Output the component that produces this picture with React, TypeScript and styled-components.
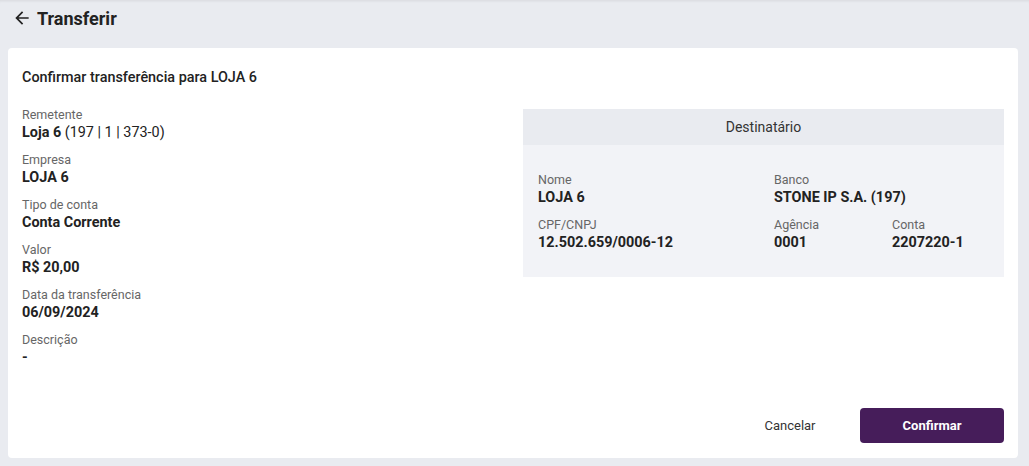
import React from 'react';
import styled, { createGlobalStyle } from 'styled-components';

const GlobalStyle = createGlobalStyle`
  html, body {
    margin: 0;
    padding: 0;
    height: 100%;
  }
  body {
    font-family: Roboto, 'Liberation Sans', sans-serif;
    background: #e9ebf0;
    color: #222;
  }
  #root {
    height: 100%;
  }
`;

const Page = styled.div`
  height: 100vh;
  display: flex;
  flex-direction: column;
  box-sizing: border-box;
  padding: 0 11px 8px 8px;
  box-shadow: inset 0 3px 3px -2px rgba(0, 0, 0, 0.08);
`;

const Header = styled.div`
  height: 48px;
  display: flex;
  align-items: center;
  gap: 5px;
  padding: 0 0 12px 4px;
  box-sizing: border-box;
  flex-shrink: 0;
`;

const BackButton = styled.button`
  border: none;
  background: none;
  padding: 0;
  display: flex;
  color: #222;
  cursor: pointer;
`;

const PageTitle = styled.h1`
  margin: 0;
  font-size: 18px;
  font-weight: 700;
  color: #222;
`;

const Card = styled.div`
  flex: 1;
  background: #fff;
  border-radius: 4px;
  padding: 20px 14px 15px;
  display: flex;
  flex-direction: column;
  box-sizing: border-box;
`;

const CardTitle = styled.h2`
  margin: 0 0 18px;
  font-size: 14.4px;
  line-height: 20px;
  font-weight: 500;
  color: #222;
`;

const Columns = styled.div`
  display: grid;
  grid-template-columns: 1fr 481px;
  gap: 15px;
  align-items: start;
`;

const InfoList = styled.div`
  display: flex;
  flex-direction: column;
  gap: 10px;
`;

const Field = styled.div<{ $span?: number }>`
  display: flex;
  flex-direction: column;
  grid-column: span ${(p) => p.$span ?? 1};
`;

const Label = styled.span`
  font-size: 12.5px;
  line-height: 17px;
  margin-bottom: 1px;
  color: #666;
`;

const Value = styled.span`
  font-size: 14.4px;
  line-height: 17px;
  font-weight: 700;
  color: #222;
`;

const Extra = styled.span`
  font-weight: 400;
`;

const Panel = styled.div`
  margin-top: 3px;
  background: #f2f3f7;
`;

const PanelHeader = styled.div`
  height: 36px;
  display: flex;
  align-items: center;
  justify-content: center;
  background: #e9ebf0;
  font-size: 14px;
  color: #333;
`;

const PanelBody = styled.div`
  display: grid;
  grid-template-columns: repeat(4, 1fr);
  column-gap: 21px;
  row-gap: 10px;
  padding: 26px 15px 26px;
`;

const Actions = styled.div`
  margin-top: auto;
  display: flex;
  justify-content: flex-end;
`;

const Button = styled.button<{ $primary?: boolean }>`
  height: 35px;
  min-width: ${(p) => (p.$primary ? '144px' : '140px')};
  border: none;
  border-radius: 4px;
  font-family: inherit;
  font-size: 13px;
  font-weight: ${(p) => (p.$primary ? 700 : 400)};
  background: ${(p) => (p.$primary ? '#461d5a' : 'transparent')};
  color: ${(p) => (p.$primary ? '#fff' : '#333')};
  cursor: pointer;
`;

const ArrowBack = () => (
  <svg width="20" height="20" viewBox="0 0 24 24" fill="currentColor">
    <path d="M20 11H7.83l5.59-5.59L12 4l-8 8 8 8 1.41-1.41L7.83 13H20v-2z" />
  </svg>
);

const sender = [
  { label: 'Remetente', value: 'Loja 6', extra: ' (197 | 1 | 373-0)' },
  { label: 'Empresa', value: 'LOJA 6' },
  { label: 'Tipo de conta', value: 'Conta Corrente' },
  { label: 'Valor', value: 'R$ 20,00' },
  { label: 'Data da transferência', value: '06/09/2024' },
  { label: 'Descrição', value: '-' },
];

const recipient = [
  { label: 'Nome', value: 'LOJA 6', span: 2 },
  { label: 'Banco', value: 'STONE IP S.A. (197)', span: 2 },
  { label: 'CPF/CNPJ', value: '12.502.659/0006-12', span: 2 },
  { label: 'Agência', value: '0001', span: 1 },
  { label: 'Conta', value: '2207220-1', span: 1 },
];

export default function App() {
  return (
    <>
      <GlobalStyle />
      <Page>
        <Header>
          <BackButton>
            <ArrowBack />
          </BackButton>
          <PageTitle>Transferir</PageTitle>
        </Header>
        <Card>
          <CardTitle>Confirmar transferência para LOJA 6</CardTitle>
          <Columns>
            <InfoList>
              {sender.map((item) => (
                <Field key={item.label}>
                  <Label>{item.label}</Label>
                  <Value>
                    {item.value}
                    {item.extra && <Extra>{item.extra}</Extra>}
                  </Value>
                </Field>
              ))}
            </InfoList>
            <Panel>
              <PanelHeader>Destinatário</PanelHeader>
              <PanelBody>
                {recipient.map((item) => (
                  <Field key={item.label} $span={item.span}>
                    <Label>{item.label}</Label>
                    <Value>{item.value}</Value>
                  </Field>
                ))}
              </PanelBody>
            </Panel>
          </Columns>
          <Actions>
            <Button>Cancelar</Button>
            <Button $primary>Confirmar</Button>
          </Actions>
        </Card>
      </Page>
    </>
  );
}
